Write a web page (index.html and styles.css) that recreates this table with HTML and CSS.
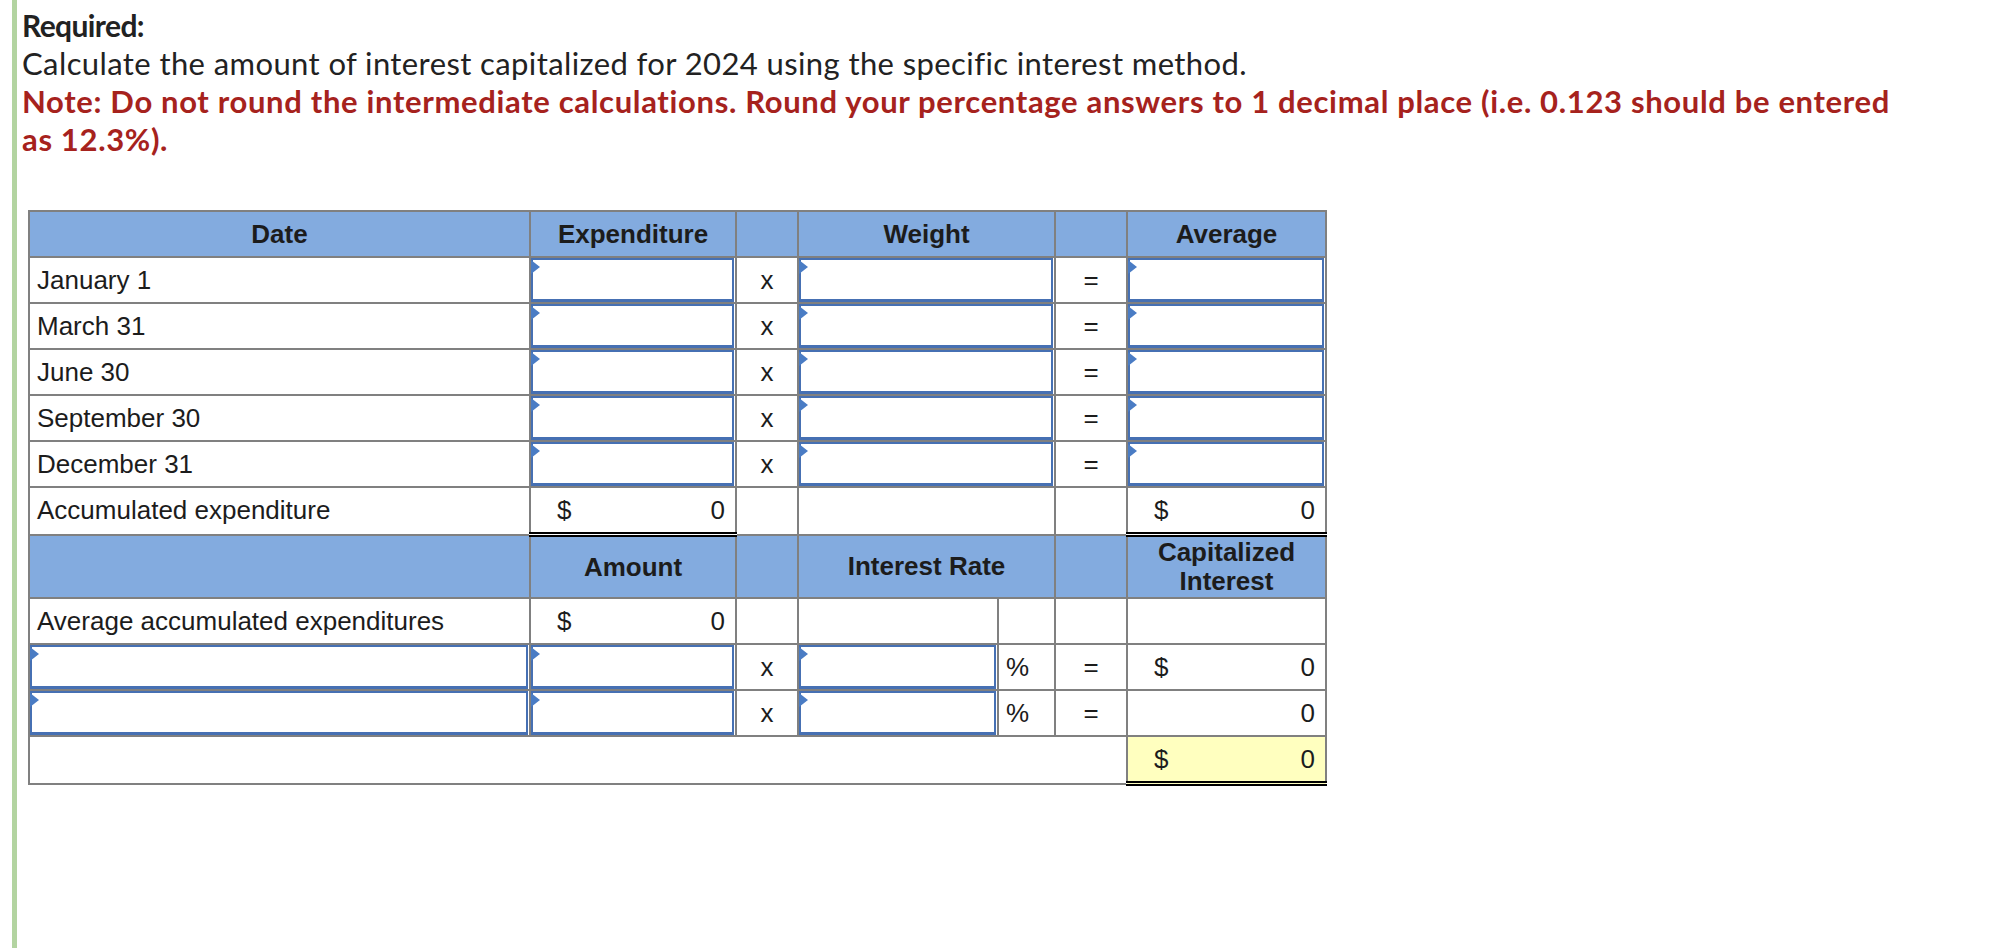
FILE: index.html
```html
<!DOCTYPE html>
<html lang="en">
<head>
<meta charset="utf-8">
<title>Interest capitalized</title>
<link rel="stylesheet" href="styles.css">
</head>
<body>
<div class="page">
  <div class="content">
    <div class="req">
      <p class="req-title">Required:</p>
      <p class="req-text">Calculate the amount of interest capitalized for 2024 using the specific interest method.</p>
      <p class="req-note">Note: Do not round the intermediate calculations. Round your percentage answers to 1 decimal place (i.e. 0.123 should be entered as 12.3%).</p>
    </div>

    <table class="wk">
      <colgroup>
        <col class="c-date">
        <col class="c-exp">
        <col class="c-op">
        <col class="c-w1">
        <col class="c-w2">
        <col class="c-eq">
        <col class="c-avg">
      </colgroup>
      <tbody>
        <tr class="hd">
          <td>Date</td>
          <td>Expenditure</td>
          <td></td>
          <td colspan="2">Weight</td>
          <td></td>
          <td>Average</td>
        </tr>
        <tr>
          <td class="lbl">January 1</td>
          <td class="ic"><div class="inp"></div></td>
          <td class="op">x</td>
          <td class="ic" colspan="2"><div class="inp"></div></td>
          <td class="op">=</td>
          <td class="ic"><div class="inp"></div></td>
        </tr>
        <tr>
          <td class="lbl">March 31</td>
          <td class="ic"><div class="inp"></div></td>
          <td class="op">x</td>
          <td class="ic" colspan="2"><div class="inp"></div></td>
          <td class="op">=</td>
          <td class="ic"><div class="inp"></div></td>
        </tr>
        <tr>
          <td class="lbl">June 30</td>
          <td class="ic"><div class="inp"></div></td>
          <td class="op">x</td>
          <td class="ic" colspan="2"><div class="inp"></div></td>
          <td class="op">=</td>
          <td class="ic"><div class="inp"></div></td>
        </tr>
        <tr>
          <td class="lbl">September 30</td>
          <td class="ic"><div class="inp"></div></td>
          <td class="op">x</td>
          <td class="ic" colspan="2"><div class="inp"></div></td>
          <td class="op">=</td>
          <td class="ic"><div class="inp"></div></td>
        </tr>
        <tr>
          <td class="lbl">December 31</td>
          <td class="ic"><div class="inp"></div></td>
          <td class="op">x</td>
          <td class="ic" colspan="2"><div class="inp"></div></td>
          <td class="op">=</td>
          <td class="ic"><div class="inp"></div></td>
        </tr>
        <tr>
          <td class="lbl">Accumulated expenditure</td>
          <td class="money sum dbl"><div class="amt"><span>$</span><span>0</span></div></td>
          <td></td>
          <td colspan="2"></td>
          <td></td>
          <td class="money sum dbl"><div class="amt"><span>$</span><span>0</span></div></td>
        </tr>
        <tr class="hd hd2">
          <td></td>
          <td>Amount</td>
          <td></td>
          <td colspan="2">Interest Rate</td>
          <td></td>
          <td>Capitalized<br>Interest</td>
        </tr>
        <tr>
          <td class="lbl">Average accumulated expenditures</td>
          <td class="money"><div class="amt"><span>$</span><span>0</span></div></td>
          <td></td>
          <td></td>
          <td></td>
          <td></td>
          <td></td>
        </tr>
        <tr>
          <td class="ic"><div class="inp"></div></td>
          <td class="ic"><div class="inp"></div></td>
          <td class="op">x</td>
          <td class="ic"><div class="inp"></div></td>
          <td class="pct">%</td>
          <td class="op">=</td>
          <td class="money"><div class="amt"><span>$</span><span>0</span></div></td>
        </tr>
        <tr>
          <td class="ic"><div class="inp"></div></td>
          <td class="ic"><div class="inp"></div></td>
          <td class="op">x</td>
          <td class="ic"><div class="inp"></div></td>
          <td class="pct">%</td>
          <td class="op">=</td>
          <td class="money"><div class="amt amt-r"><span>0</span></div></td>
        </tr>
        <tr class="tot">
          <td colspan="6" class="blank"></td>
          <td class="money sum dbl total"><div class="amt"><span>$</span><span>0</span></div></td>
        </tr>
      </tbody>
    </table>
  </div>
</div>
</body>
</html>
```

FILE: styles.css
```css
html, body {
  margin: 0;
  padding: 0;
  background: #ffffff;
}

.page {
  min-height: 948px;
  padding-left: 12px;
  display: flex;
}

.content {
  flex: 1;
  border-left: 5px solid #b3d4a1;
  padding: 6px 0 0 5px;
  min-height: 942px;
}

.req {
  width: 1895px;
  font-family: "Lato", "Open Sans", sans-serif;
  font-size: 31px;
  line-height: 38px;
  letter-spacing: 0.4px;
  color: #222222;
}

.req p {
  margin: 0;
}

.req-title {
  font-weight: 700;
  font-size: 30px;
  letter-spacing: -0.6px;
}

.req-note {
  font-weight: 700;
  letter-spacing: 0.66px;
  color: #a6221d;
}

.wk {
  margin: 52px 0 0 6px;
  border-collapse: collapse;
  table-layout: fixed;
  width: 1299px;
  font-family: "Liberation Sans", Arial, sans-serif;
  font-size: 26px;
  color: #1c1c1c;
}

.c-date { width: 501px; }
.c-exp { width: 206px; }
.c-op { width: 62px; }
.c-w1 { width: 200px; }
.c-w2 { width: 57px; }
.c-eq { width: 72px; }
.c-avg { width: 199px; }

.wk td {
  border: 2px solid #808080;
  padding: 0;
  height: 44px;
  vertical-align: middle;
}

.hd td {
  background: #83abdf;
  font-weight: 700;
  text-align: center;
  line-height: 29px;
}

.hd2 td {
  height: 60px;
}

.lbl {
  padding-left: 7px !important;
  white-space: nowrap;
}

.op {
  text-align: center;
}

.pct {
  padding-left: 7px !important;
}

.ic {
  padding: 0 1px 0 0 !important;
}

.inp {
  position: relative;
  box-sizing: border-box;
  height: 44px;
  border: 2px solid #4670b3;
  border-bottom-width: 3px;
  background: #ffffff;
}

.inp::before {
  content: "";
  position: absolute;
  left: -2px;
  top: 0;
  border-left: 9px solid #4a7cc4;
  border-top: 7px solid transparent;
  border-bottom: 7px solid transparent;
}

.amt {
  display: flex;
  justify-content: space-between;
  padding: 0 10px 0 26px;
}

.amt-r {
  justify-content: flex-end;
}

.wk td.sum {
  border-top: 2px solid #000000;
}

.wk td.dbl {
  border-bottom: 5px double #000000;
}

.tot td.blank {
  border-right: 2px solid #808080;
}

.total {
  background: #ffffbf;
}
```
